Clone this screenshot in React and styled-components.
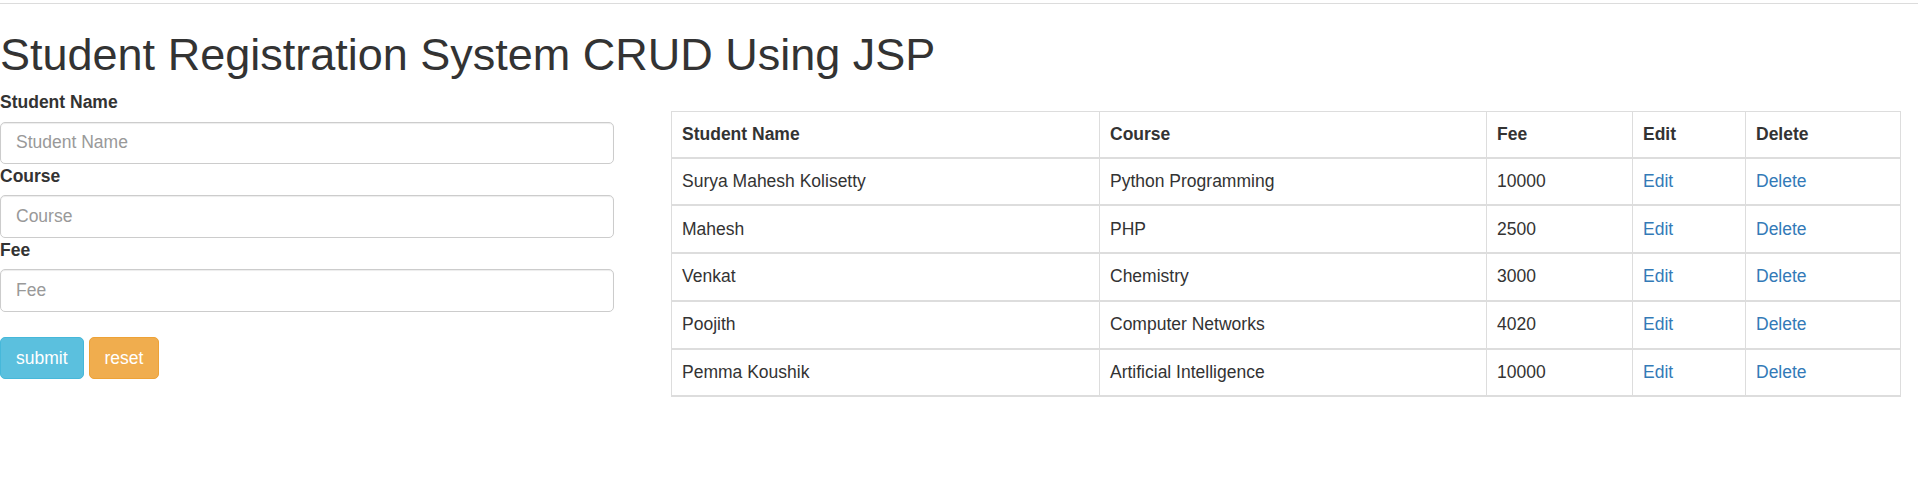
import React from "react";
import styled, { createGlobalStyle } from "styled-components";

const students = [
  { name: "Surya Mahesh Kolisetty", course: "Python Programming", fee: "10000" },
  { name: "Mahesh", course: "PHP", fee: "2500" },
  { name: "Venkat", course: "Chemistry", fee: "3000" },
  { name: "Poojith", course: "Computer Networks", fee: "4020" },
  { name: "Pemma Koushik", course: "Artificial Intelligence", fee: "10000" },
];

// column widths incl. right border
const columns = [428, 387, 146, 113, 155];

export default function App() {
  return (
    <>
      <GlobalStyle />
      <TopRule />
      <Title>Student Registration System CRUD Using JSP</Title>
      <Content>
        <Form onSubmit={(e) => e.preventDefault()}>
          <Label>Student Name</Label>
          <Input placeholder="Student Name" />
          <Label>Course</Label>
          <Input placeholder="Course" />
          <Label>Fee</Label>
          <Input placeholder="Fee" />
          <Buttons>
            <Button type="submit" $variant="info">submit</Button>
            <Button type="reset" $variant="warning">reset</Button>
          </Buttons>
        </Form>
        <TableWrap>
          <Table>
            <colgroup>
              {columns.map((w, i) => (
                <col key={i} style={{ width: w }} />
              ))}
            </colgroup>
            <thead>
              <tr>
                <Th>Student Name</Th>
                <Th>Course</Th>
                <Th>Fee</Th>
                <Th>Edit</Th>
                <Th>Delete</Th>
              </tr>
            </thead>
            <tbody>
              {students.map((s, i) => (
                <tr key={i}>
                  <Td>{s.name}</Td>
                  <Td>{s.course}</Td>
                  <Td>{s.fee}</Td>
                  <Td><Link href="#">Edit</Link></Td>
                  <Td><Link href="#">Delete</Link></Td>
                </tr>
              ))}
            </tbody>
          </Table>
        </TableWrap>
      </Content>
    </>
  );
}

const GlobalStyle = createGlobalStyle`
  * { box-sizing: border-box; }
  body {
    margin: 0;
    background: #fff;
    color: #333;
    font-family: "Liberation Sans", Arial, Helvetica, sans-serif;
    font-size: 17.5px;
    line-height: 25px;
  }
`;

const TopRule = styled.div`
  margin-top: 3px;
  border-top: 1px solid #dcdcdc;
`;

const Title = styled.h1`
  margin: 26px 0 10.9px;
  font-size: 45px;
  line-height: 1.1;
  font-weight: 500;
  color: #333;
`;

const Content = styled.div`
  display: grid;
  grid-template-columns: 614px 1230px;
  column-gap: 57px;
  align-items: start;
`;

const Form = styled.form`
  display: flex;
  flex-direction: column;
`;

const Label = styled.label`
  display: block;
  font-weight: 700;
  line-height: 25px;
  margin-bottom: 6.25px;
`;

const Input = styled.input`
  display: block;
  width: 100%;
  height: 42.5px;
  padding: 7.5px 15px;
  font-family: inherit;
  font-size: 17.5px;
  line-height: 25px;
  color: #555;
  background: #fff;
  border: 1px solid #ccc;
  border-radius: 5px;
  box-shadow: inset 0 1px 1px rgba(0, 0, 0, 0.075);
  outline: none;

  &::placeholder {
    color: #999;
  }
`;

const Buttons = styled.div`
  display: flex;
  gap: 5px;
  margin-top: 25.5px;
`;

const buttonColors = {
  info: { bg: "#5bc0de", border: "#46b8da" },
  warning: { bg: "#f0ad4e", border: "#eea236" },
};

const Button = styled.button`
  padding: 7.5px 15px;
  font-family: inherit;
  font-size: 17.5px;
  line-height: 25px;
  color: #fff;
  background: ${(p) => buttonColors[p.$variant].bg};
  border: 1px solid ${(p) => buttonColors[p.$variant].border};
  border-radius: 5px;
  cursor: pointer;
`;

const TableWrap = styled.div`
  margin-top: 20.6px;
`;

const Table = styled.table`
  width: 1230px;
  table-layout: fixed;
  border-collapse: separate;
  border-spacing: 0;
  border-left: 1px solid #ddd;
  border-top: 1px solid #ddd;
`;

const Th = styled.th`
  padding: 9.9px 10px;
  line-height: 25px;
  text-align: left;
  font-weight: 700;
  border-right: 1px solid #ddd;
  border-bottom: 2px solid #ddd;
`;

const Td = styled.td`
  padding: 10.35px 10px;
  line-height: 25px;
  border-right: 1px solid #ddd;
  border-bottom: 2px solid #ddd;
`;

const Link = styled.a`
  color: #337ab7;
  text-decoration: none;
`;
